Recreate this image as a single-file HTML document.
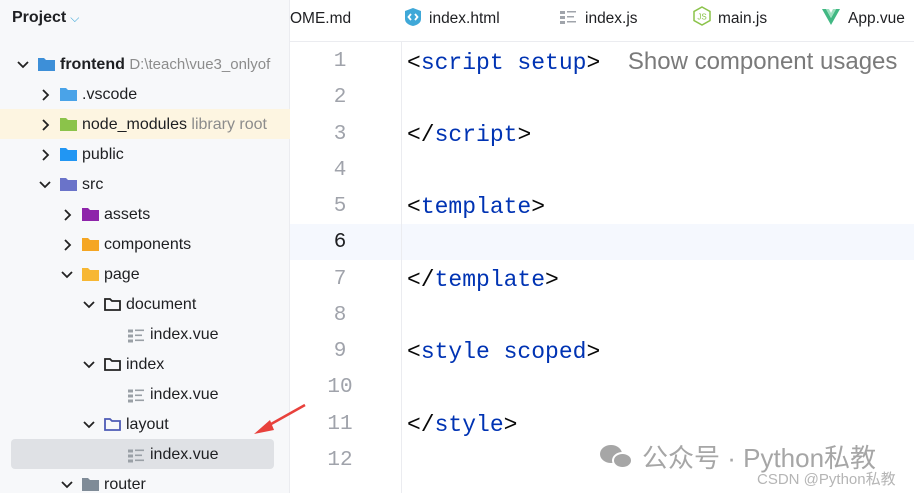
<!DOCTYPE html>
<html><head><meta charset="utf-8"><style>
*{margin:0;padding:0;box-sizing:border-box}
body{width:914px;height:493px;overflow:hidden;background:#fff;font-family:"Liberation Sans","Noto Sans CJK SC",sans-serif;position:relative}
#side{position:absolute;left:0;top:0;width:290px;height:493px;background:#f7f8fa;border-right:1px solid #ebecf0}
.title{position:absolute;left:12px;top:9px;font-size:16px;font-weight:bold;color:#1e1f22}
.title span{color:#3fa8d8;font-weight:normal;font-size:12px;margin-left:4px}
.row{position:absolute;left:0;width:290px;height:30px;font-size:16px;color:#1e1f22;line-height:30px;white-space:nowrap}
.row .ch{position:absolute;top:0;width:14px;height:30px}
.row .ic{position:absolute;top:7px;width:17px;height:15px}
.row .t{position:absolute;top:0}
.g{color:#8c8c8c}
#tabs{position:absolute;left:290px;top:0;width:624px;height:42px;border-bottom:1px solid #ebecf0;font-size:15.5px;color:#1e1f22}
.tab{position:absolute;top:10px}
#gut{position:absolute;left:290px;top:42px;width:112px;height:451px;border-right:1px solid #ebecf0}
.hl{position:absolute;left:290px;top:224px;width:624px;height:36px;background:#f5f8fe}
.ln{position:absolute;left:300px;width:80px;text-align:center;font-family:"Liberation Mono",monospace;font-size:21px;color:#a0a3ab;line-height:36px}
.code{position:absolute;left:407px;font-family:"Liberation Mono",monospace;font-size:23px;line-height:36px;color:#0033b3;white-space:pre}
.code b{font-weight:normal;color:#080808}
</style></head><body>
<div id="side">
<div class="title">Project<span>⌵</span></div>
<div class="row" style="top:109px;background:#fdf5e1"></div>
<div class="row" style="top:439px"><div style="position:absolute;left:11px;top:0;width:263px;height:30px;background:#dfe1e5;border-radius:4px"></div></div>
</div>
<div id="tree"></div>
<div id="tabs">
<div class="tab" style="left:0">OME.md</div>
<svg style="position:absolute;left:114px;top:7px" width="18" height="20"><path d="M9 1L17 4V12Q17 17 9 19Q1 17 1 12V4Z" fill="#3fa8d8"/><path d="M7 7L4.5 10L7 13M11 7L13.5 10L11 13" stroke="#fff" stroke-width="1.8" fill="none"/></svg>
<div class="tab" style="left:139px">index.html</div>
<svg style="position:absolute;left:270px;top:11px" width="17" height="14"><g fill="#a0a4ab"><rect x="0" y="0" width="5" height="3"/><rect x="0" y="5" width="5" height="3"/><rect x="0" y="10" width="5" height="3"/><rect x="7" y="0" width="9" height="1.5"/><rect x="7" y="5" width="7" height="1.5"/><rect x="7" y="10" width="9" height="1.5"/></g></svg>
<div class="tab" style="left:295px">index.js</div>
<svg style="position:absolute;left:403px;top:6px" width="18" height="20"><path d="M9 1L17 5.5V14.5L9 19L1 14.5V5.5Z" fill="none" stroke="#8bc34a" stroke-width="1.5"/><text x="9" y="13.5" font-size="8" text-anchor="middle" fill="#8bc34a" font-family="Liberation Sans">JS</text></svg>
<div class="tab" style="left:428px">main.js</div>
<svg style="position:absolute;left:532px;top:9px" width="18" height="16"><path d="M0 0H4L9 9L14 0H18L9 16Z" fill="#41b883"/><path d="M4 0H7L9 4L11 0H14L9 9Z" fill="#9de0bf"/></svg>
<div class="tab" style="left:558px">App.vue</div>
</div>
<div class="hl"></div>
<div id="gut"></div>
<div id="lns"></div>
<div class="code" style="top:44px"><b>&lt;</b>script setup<b>&gt;</b>  <span style="color:#7a7a7a;font-family:'Liberation Sans',sans-serif;font-size:24px">Show component usages</span></div>
<div class="code" style="top:117px"><b>&lt;/</b>script<b>&gt;</b></div>
<div class="code" style="top:189px"><b>&lt;</b>template<b>&gt;</b></div>
<div class="code" style="top:262px"><b>&lt;/</b>template<b>&gt;</b></div>
<div class="code" style="top:334px"><b>&lt;</b>style scoped<b>&gt;</b></div>
<div class="code" style="top:407px"><b>&lt;/</b>style<b>&gt;</b></div>
<svg style="position:absolute;left:250px;top:400px" width="60" height="40"><path d="M55 5L14 28" stroke="#e8413c" stroke-width="2.5"/><path d="M4 34L20 20L24 30Z" fill="#e8413c"/></svg>
<div style="position:absolute;left:600px;top:438px;color:#a6a6a6;font-size:26px;font-family:'Liberation Sans','Noto Sans CJK SC',sans-serif;white-space:nowrap"><span style="display:inline-block;width:42px;height:28px;vertical-align:-4px;position:relative"><i style="position:absolute;left:0;top:2px;width:22px;height:18px;border-radius:50%;background:#a6a6a6"></i><i style="position:absolute;left:12px;top:9px;width:21px;height:17px;border-radius:50%;background:#a6a6a6;border:2px solid #fff"></i></span>公众号 · Python私教</div>
<div style="position:absolute;left:757px;top:468px;color:#b5b5b5;font-size:15px;font-family:'Liberation Sans','Noto Sans CJK SC',sans-serif">CSDN @Python私教</div>
<script>
var L=[[0,1,'fold','#3d8fd8','<b style="font-weight:bold">frontend</b> <span class="g" style="font-size:15px">D:\\teach\\vue3_onlyof</span>'],
[1,0,'fold','#4aa3e8','.vscode'],[1,0,'fold','#8bc34a','node_modules <span class="g">library root</span>'],[1,0,'fold','#2196f3','public'],[1,1,'fold','#6a73c9','src'],
[2,0,'fold','#8e24aa','assets'],[2,0,'fold','#f5a623','components'],[2,1,'fold','#f7b733','page'],[3,1,'out','#222','document'],[4,-1,'file','','index.vue'],
[3,1,'out','#222','index'],[4,-1,'file','','index.vue'],[3,1,'out','#4e5bb5','layout'],[4,-1,'file','','index.vue'],[2,1,'fold','#7f8b97','router']];
var h='';L.forEach(function(r,i){var y=50+i*30,x=16+r[0]*22;h+='<div class="row" style="top:'+y+'px">';
if(r[1]>=0)h+='<svg class="ch" style="left:'+x+'px" viewBox="0 0 14 30"><path d="'+(r[1]?'M2 12L7 17L12 12':'M5 10L10 15L5 20')+'" stroke="#222" stroke-width="1.8" fill="none"/></svg>';
var ix=x+22;if(r[2]=='fold')h+='<svg class="ic" style="left:'+ix+'px" viewBox="0 0 17 15"><path d="M0 1H6L8 3H17V14H0Z" fill="'+r[3]+'"/></svg>';
else if(r[2]=='out')h+='<svg class="ic" style="left:'+ix+'px" viewBox="0 0 17 15"><path d="M1 2H6L8 4H16V13H1Z" fill="none" stroke="'+r[3]+'" stroke-width="1.8"/></svg>';
else {ix=x+24;h+='<svg class="ic" style="left:'+ix+'px;top:9px" viewBox="0 0 17 14"><g fill="#9aa0a6"><rect width="5" height="3"/><rect y="5" width="5" height="3"/><rect y="10" width="5" height="3"/><rect x="7" width="9" height="1.6"/><rect x="7" y="5" width="7" height="1.6"/><rect x="7" y="10" width="9" height="1.6"/></g></svg>';}
h+='<span class="t" style="left:'+(ix+22)+'px">'+r[4]+'</span></div>';});
document.getElementById('tree').innerHTML=h;
var n='';for(var i=1;i<=12;i++)n+='<div class="ln" style="top:'+(44+(i-1)*36.27)+'px;'+(i==6?'color:#1e1f22':'')+'">'+i+'</div>';
document.getElementById('lns').innerHTML=n;
</script>
</body></html>
